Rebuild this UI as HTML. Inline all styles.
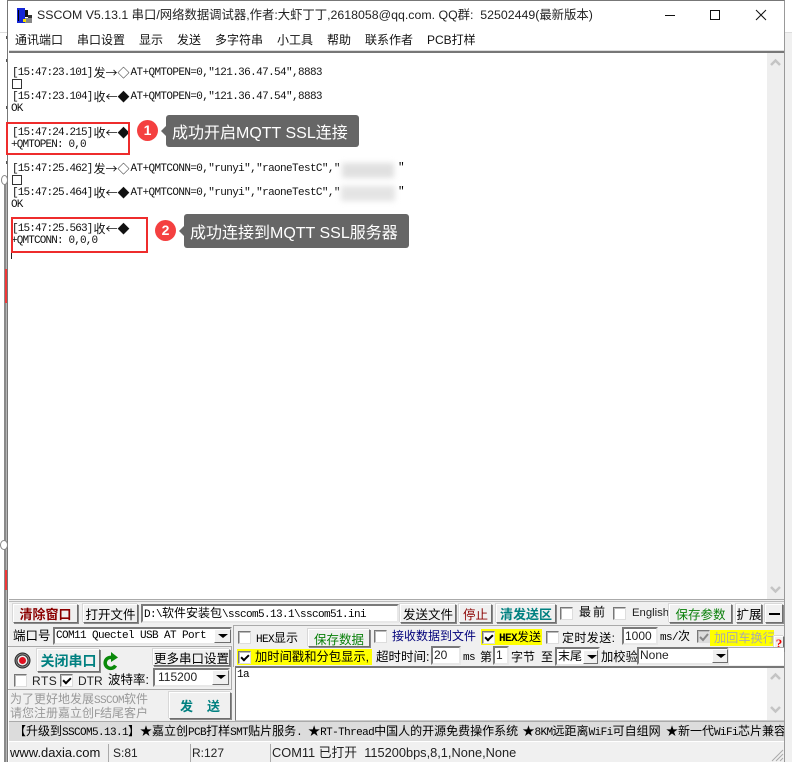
<!DOCTYPE html>
<html><head><meta charset="utf-8">
<style>
html,body{margin:0;padding:0;background:#fff;}
#r{position:relative;width:792px;height:762px;overflow:hidden;background:#fff;font-family:"Liberation Sans","Noto Sans CJK SC",sans-serif;font-size:12px;color:#000;}
#r div,#r span.t{position:absolute;box-sizing:border-box;white-space:nowrap;}
.t{line-height:14px;}
.b{background:#f0f0f0;border:1px solid;border-color:#fff #6e6e6e #6e6e6e #fff;box-shadow:1px 1px 0 #8a8a8a,-1px -1px 0 #d8d8d8;display:flex;align-items:center;justify-content:center;}
.i{background:#fff;border:2px solid;border-color:#7a7a7a #e8e8e8 #e8e8e8 #7a7a7a;line-height:15px;padding-left:1px;}
.c{width:13px;height:13px;background:#fff;border:1px solid;border-color:#777 #ddd #ddd #777;box-shadow:inset 1px 1px 0 #bbb;}
.ck::after{content:"";position:absolute;left:2px;top:1px;width:6px;height:3px;border-left:2px solid #000;border-bottom:2px solid #000;transform:rotate(-45deg) translate(-1px,1px);}
.d{width:17px;background:#f0f0f0;border:1px solid;border-color:#fff #6e6e6e #6e6e6e #fff;}
.d::after{content:"";position:absolute;left:3px;top:4px;border-left:5px solid transparent;border-right:5px solid transparent;border-top:4px solid #000;}
.m,.z{font-family:"Liberation Mono","Noto Sans CJK SC",monospace;font-size:11px;letter-spacing:-.6px;}
.l{left:12px;height:12px;line-height:12px;font-family:"Liberation Mono","Noto Sans CJK SC",monospace;font-size:11px;letter-spacing:-.85px;color:#111;}
.l i{font-style:normal;display:inline-block;width:12px;text-align:center;font-size:12px;letter-spacing:0;font-family:"Noto Sans CJK SC",sans-serif;line-height:12px;vertical-align:top;}
.l b{font-weight:normal;letter-spacing:-.62px;margin-left:1px;}
.tip{background:#666;color:#fff;font-size:16px;border-radius:3px;display:flex;align-items:center;padding-left:6px;}
.tip::before{content:"";position:absolute;left:-5px;top:50%;margin-top:-5px;border-top:5px solid transparent;border-bottom:5px solid transparent;border-right:5px solid #666;}
.o{background:#f44040;border-radius:50%;color:#fff;width:21px;height:21px;text-align:center;line-height:21px;font-size:14px;font-weight:bold;}
.y{background:#ff0;}
</style></head><body><div id="r">

<!-- outside -->
<div style="left:785px;top:32px;width:7px;height:730px;background:#f0f0f0;border-top:1px solid #ddd"></div>
<div style="left:0;top:32px;width:7px;height:1px;background:#ddd"></div>
<div style="left:4px;top:180px;width:2px;height:582px;background:#8a8a8a"></div>
<div style="left:6px;top:180px;width:1px;height:582px;background:#b5b5b5"></div>
<div style="left:5px;top:269px;width:2px;height:34px;background:#f03838"></div>
<div style="left:5px;top:570px;width:2px;height:20px;background:#f03838"></div>
<div style="left:6px;top:36px;width:1px;height:3px;background:#555"></div>
<div style="left:6px;top:59px;width:1px;height:3px;background:#555"></div>
<div style="left:6px;top:106px;width:1px;height:3px;background:#555"></div>
<div style="left:6px;top:161px;width:1px;height:3px;background:#555"></div>
<div style="left:7px;top:0;width:2px;height:762px;background:#777"></div>
<div style="left:0;top:540px;width:8px;height:10px;background:#fff;border:1px solid #888;border-radius:50%"></div>
<div style="left:1px;top:175px;width:7px;height:10px;background:#fff;border:1px solid #888;border-radius:50%"></div>

<!-- window frame -->
<div style="left:8px;top:0;width:777px;height:762px;background:#fff;border-top:1px solid #777;border-right:1px solid #999"></div>

<!-- title -->
<svg style="position:absolute;left:16px;top:7px" width="17" height="17" viewBox="0 0 17 17"><rect x="1" y="1" width="8" height="15" fill="#1426d6"/><rect x="2" y="3" width="1" height="11" fill="#000"/><rect x="9" y="3" width="3" height="7" fill="#111"/><rect x="12" y="8" width="4" height="3" fill="#333"/><rect x="9" y="11" width="7" height="5" fill="#888"/><rect x="7" y="12" width="3" height="3" fill="#f5e000"/></svg>
<span class="t" style="left:37px;top:8px;font-size:12.350px;color:#222">SSCOM V5.13.1 串口/网络数据调试器,作者:大虾丁丁,2618058@qq.com. QQ群:&nbsp; 52502449(最新版本)</span>
<div style="left:665px;top:15px;width:10px;height:1px;background:#111"></div>
<div style="left:710px;top:10px;width:10px;height:10px;border:1px solid #111"></div>
<svg style="position:absolute;left:755px;top:9px" width="12" height="12"><path d="M1 1L11 11M11 1L1 11" stroke="#111" stroke-width="1" fill="none"/></svg>

<!-- menu -->
<span class="t" style="left:15px;top:33px;color:#111">通讯端口</span>
<span class="t" style="left:77px;top:33px;color:#111">串口设置</span>
<span class="t" style="left:139px;top:33px;color:#111">显示</span>
<span class="t" style="left:177px;top:33px;color:#111">发送</span>
<span class="t" style="left:215px;top:33px;color:#111">多字符串</span>
<span class="t" style="left:277px;top:33px;color:#111">小工具</span>
<span class="t" style="left:327px;top:33px;color:#111">帮助</span>
<span class="t" style="left:365px;top:33px;color:#111">联系作者</span>
<span class="t" style="left:427px;top:33px;color:#111">PCB打样</span>

<div style="left:9px;top:50px;width:775px;height:1px;background:#ddd"></div>
<div style="left:9px;top:51px;width:775px;height:2px;background:#777"></div>

<!-- scrollbar -->
<div style="left:767px;top:53px;width:17px;height:546px;background:#eee"></div>
<svg style="position:absolute;left:769px;top:58px" width="13" height="9"><path d="M2 7L6.500 2.500L11 7" stroke="#c4c4c4" stroke-width="2.500" fill="none"/></svg>
<svg style="position:absolute;left:769px;top:585px" width="13" height="9"><path d="M2 2L6.500 6.500L11 2" stroke="#c4c4c4" stroke-width="2.500" fill="none"/></svg>

<!-- log -->
<div class="l" style="top:67px">[15:47:23.101]<i style="margin-left:1px">发</i><i>→</i><i>◇</i><b>AT+QMTOPEN=0,"121.36.47.54",8883</b></div>
<div style="left:12px;top:79px;width:10px;height:10px;border:1px solid #333"></div>
<div class="l" style="top:91px">[15:47:23.104]<i style="margin-left:1px">收</i><i>←</i><i>◆</i><b>AT+QMTOPEN=0,"121.36.47.54",8883</b></div>
<div class="l" style="top:103px;left:11px">OK</div>
<div class="l" style="top:127px">[15:47:24.215]<i style="margin-left:1px">收</i><i>←</i><i>◆</i></div>
<div class="l" style="top:139px;left:11px">+QMTOPEN: 0,0</div>
<div class="l" style="top:163px">[15:47:25.462]<i style="margin-left:1px">发</i><i>→</i><i>◇</i><b>AT+QMTCONN=0,"runyi","raoneTestC","</b></div>
<div style="left:12px;top:175px;width:10px;height:10px;border:1px solid #333"></div>
<div class="l" style="top:187px">[15:47:25.464]<i style="margin-left:1px">收</i><i>←</i><i>◆</i><b>AT+QMTCONN=0,"runyi","raoneTestC","</b></div>
<div class="l" style="top:199px;left:11px">OK</div>
<div class="l" style="top:223px">[15:47:25.563]<i style="margin-left:1px">收</i><i>←</i><i>◆</i></div>
<div class="l" style="top:235px;left:11px">+QMTCONN: 0,0,0</div>
<div style="left:11px;top:247px;width:1px;height:12px;background:#222"></div>

<!-- blur patches -->
<div style="left:340px;top:159px;width:58px;height:47px;background:#fff"></div>
<div style="left:342px;top:163px;width:52px;height:15px;background:#e0e0e0;filter:blur(3px)"></div>
<div style="left:341px;top:186px;width:54px;height:15px;background:#e4e4e4;filter:blur(3px)"></div>
<span class="t m" style="left:398px;top:162px;line-height:12px">"</span>
<span class="t m" style="left:398px;top:186px;line-height:12px">"</span>

<!-- annotations -->
<div style="left:6px;top:122px;width:124px;height:33px;border:2px solid #ee2c2c"></div>
<div style="left:11px;top:217px;width:137px;height:36px;border:2px solid #ee2c2c"></div>
<div class="o" style="left:137px;top:120px">1</div>
<div class="tip" style="left:166px;top:115px;width:193px;height:32px">成功开启MQTT SSL连接</div>
<div class="o" style="left:155px;top:220px">2</div>
<div class="tip" style="left:184px;top:214px;width:225px;height:34px">成功连接到MQTT SSL服务器</div>

<!-- bottom panel -->
<div style="left:9px;top:599px;width:775px;height:163px;background:#f0f0f0;border-top:1px solid #aaa"></div>
<div style="left:9px;top:601px;width:775px;height:1px;background:#bbb"></div>

<!-- row 1 -->
<div class="b" style="left:13px;top:604px;width:65px;height:19px;font-weight:bold;color:#8b0000;font-size:13px">清除窗口</div>
<div class="b" style="left:83px;top:604px;width:55px;height:19px;font-size:12.500px">打开文件</div>
<div class="i" style="left:141px;top:604px;width:258px;height:19px;line-height:14px"><span class="z">D:\</span>软件安装包<span class="z">\sscom5.13.1\sscom51.ini</span></div>
<div class="b" style="left:400px;top:604px;width:56px;height:19px;font-size:12.500px">发送文件</div>
<div class="b" style="left:459px;top:604px;width:33px;height:19px;font-size:12.500px;color:#8b0000">停止</div>
<div class="b" style="left:496px;top:604px;width:60px;height:19px;font-weight:bold;color:#008080;font-size:13px">清发送区</div>
<div class="c" style="left:560px;top:607px"></div>
<span class="t" style="left:579px;top:605px;letter-spacing:2px">最前</span>
<div class="c" style="left:613px;top:607px"></div>
<span class="t" style="left:632px;top:606px;color:#222;font-size:11.300px">English</span>
<div class="b" style="left:669px;top:604px;width:63px;height:19px;color:#0a800a;font-size:12.500px">保存参数</div>
<div class="b" style="left:736px;top:604px;width:26px;height:19px;font-size:12.500px">扩展</div>
<div class="b" style="left:765px;top:604px;width:18px;height:19px"><span style="display:block;width:11px;height:2px;background:#000"></span></div>

<!-- left group -->
<span class="t" style="left:13px;top:629px;font-size:12.500px">端口号</span>
<div class="i m" style="left:53px;top:627px;width:179px;height:18px;line-height:14px">COM11 Quectel USB AT Port</div>
<div class="d" style="left:214px;top:629px;height:14px"></div>
<div style="left:8px;top:646px;width:224px;height:1px;background:#aaa"></div>
<div style="left:8px;top:689px;width:224px;height:1px;background:#aaa"></div>
<div style="left:231px;top:646px;width:1px;height:44px;background:#aaa"></div>

<svg style="position:absolute;left:14px;top:652px" width="17" height="17"><circle cx="8.500" cy="8.500" r="7.500" fill="#888" stroke="#222" stroke-width="1"/><circle cx="8.500" cy="8.500" r="5.500" fill="#eee" stroke="#333" stroke-width="1"/><circle cx="8.500" cy="8.500" r="3.500" fill="#e01020"/></svg>
<div class="b" style="left:37px;top:649px;width:63px;height:23px;font-weight:bold;color:#008080;font-size:14px">关闭串口</div>
<svg style="position:absolute;left:103px;top:651px" width="17" height="20" viewBox="0 0 17 20"><path d="M12.500 14.500A5.500 5.500 0 1 1 9 6.500" stroke="#0a8a0a" stroke-width="3.500" fill="none"/><path d="M8 1L15 6.500L8 11Z" fill="#0a8a0a"/></svg>
<div class="b" style="left:153px;top:649px;width:77px;height:17px;font-size:12.500px">更多串口设置</div>
<div class="c" style="left:14px;top:674px"></div>
<span class="t" style="left:32px;top:674px;color:#222;letter-spacing:.5px">RTS</span>
<div class="c ck" style="left:60px;top:674px"></div>
<span class="t" style="left:78px;top:674px;color:#222">DTR</span>
<span class="t" style="left:108px;top:673px;font-size:12.500px">波特率:</span>
<div class="i" style="left:153px;top:668px;width:77px;height:19px;line-height:14px;padding-left:3px;color:#222">115200</div>
<div class="d" style="left:212px;top:670px;height:15px"></div>

<span class="t" style="left:10px;top:692px;color:#999">为了更好地发展<span class="z">SSCOM</span>软件</span>
<span class="t" style="left:10px;top:706px;color:#999">请您注册嘉立创<span class="z">F</span>结尾客户</span>
<div class="b" style="left:169px;top:692px;width:62px;height:27px;font-weight:bold;color:#008080;font-size:13px;letter-spacing:14px;padding-left:14px">发送</div>

<!-- right rows -->
<div style="left:233px;top:625px;width:551px;height:1px;background:#aaa"></div>
<div style="left:233px;top:625px;width:1px;height:42px;background:#aaa"></div>
<div class="c" style="left:238px;top:631px"></div>
<span class="t" style="left:256px;top:631px"><span class="z">HEX</span>显示</span>
<div class="b" style="left:308px;top:629px;width:62px;height:18px;color:#0a800a;font-size:12.500px">保存数据</div>
<div class="c" style="left:374px;top:630px"></div>
<span class="t" style="left:392px;top:629px;color:#00007a">接收数据到文件</span>

<div class="y" style="left:481px;top:629px;width:61px;height:16px"></div>
<div class="c ck" style="left:482px;top:631px"></div>
<span class="t" style="left:499px;top:630px"><span class="z" style="font-weight:bold">HEX</span>发送</span>
<div class="c" style="left:546px;top:631px"></div>
<span class="t" style="left:562px;top:631px;letter-spacing:.4px">定时发送:</span>
<div class="i" style="left:622px;top:627px;width:36px;height:18px;line-height:14px;padding-left:1px;color:#222">1000</div>
<span class="t" style="left:660px;top:629px"><span class="z">ms/</span>次</span>
<div class="c" style="left:697px;top:630px;background:#ddd"></div>
<svg style="position:absolute;left:698px;top:631px" width="12" height="12"><path d="M2 6L5 9L10 3" stroke="#888" stroke-width="2" fill="none"/></svg>
<div class="y" style="left:710px;top:630px;width:64px;height:16px"></div>
<span class="t" style="left:714px;top:631px;color:#aaa;font-size:12.200px">加回车换行</span>
<div class="b" style="left:774px;top:636px;width:10px;height:15px;color:#e00;font-weight:bold;font-size:13px;font-family:'Liberation Serif',serif">?</div>

<div class="y" style="left:237px;top:649px;width:135px;height:16px"></div>
<div class="c ck" style="left:238px;top:651px"></div>
<span class="t" style="left:255px;top:650px;font-size:12.300px">加时间戳和分包显示,</span>
<span class="t" style="left:376px;top:650px;font-size:12.500px">超时时间:</span>
<div class="i" style="left:431px;top:646px;width:30px;height:19px;line-height:14px;padding-left:1px;color:#222">20</div>
<span class="t m" style="left:463px;top:651px">ms</span>
<span class="t" style="left:480px;top:650px">第</span>
<div class="i" style="left:493px;top:646px;width:16px;height:19px;line-height:14px;color:#222">1</div>
<span class="t" style="left:511px;top:650px">字节</span>
<span class="t" style="left:541px;top:650px">至</span>
<div class="i" style="left:555px;top:647px;width:45px;height:19px;line-height:14px;padding-left:1px">末尾</div>
<div class="d" style="left:583px;top:650px;height:14px;width:15px"></div>
<span class="t" style="left:601px;top:650px;font-size:12.300px">加校验</span>
<div class="i" style="left:637px;top:647px;width:92px;height:18px;line-height:13px;padding-left:1px;color:#222">None</div>
<div class="d" style="left:712px;top:649px;height:14px;width:16px"></div>
<div style="left:729px;top:647px;width:55px;height:18px;background:#fff;border-top:1px solid #aaa"></div>

<!-- send area -->
<div style="left:235px;top:666px;width:549px;height:55px;background:#fff;border-top:2px solid #777;border-left:1px solid #777;border-bottom:1px solid #ccc"></div>
<span class="t m" style="left:237px;top:668px">1a</span>
<div style="left:767px;top:668px;width:17px;height:52px;background:#eee"></div>
<svg style="position:absolute;left:769px;top:672px" width="13" height="9"><path d="M2 7L6.500 2.500L11 7" stroke="#c4c4c4" stroke-width="2.500" fill="none"/></svg>
<svg style="position:absolute;left:769px;top:705px" width="13" height="9"><path d="M2 2L6.500 6.500L11 2" stroke="#c4c4c4" stroke-width="2.500" fill="none"/></svg>

<!-- ticker -->
<div style="left:9px;top:721px;width:775px;height:20px;background:#dcdcdc;border-top:1px solid #aaa;overflow:hidden">
<span class="t" style="position:absolute;left:5px;top:2px">【升级到<span class="z">SSCOM5.13.1</span>】★嘉立创<span class="z">PCB</span>打样<span class="z">SMT</span>贴片服务<span class="z">. </span>★<span class="z">RT-Thread</span>中国人的开源免费操作系统<span style="margin-left:1px"> </span>★<span class="z">8KM</span>远距离<span class="z">WiFi</span>可自组网<span style="margin-left:2px"> </span>★新一代<span class="z">WiFi</span>芯片兼容</span>
</div>

<!-- status -->
<div style="left:9px;top:741px;width:775px;height:21px;background:#f0f0f0;border-top:1px solid #fff"></div>
<div style="left:108px;top:744px;width:1px;height:18px;background:#aaa"></div>
<div style="left:190px;top:744px;width:1px;height:18px;background:#aaa"></div>
<div style="left:270px;top:744px;width:1px;height:18px;background:#aaa"></div>
<span class="t" style="left:10px;top:746px;color:#111;font-size:13px">www.daxia.com</span>
<span class="t" style="left:113px;top:746px;color:#222">S:81</span>
<span class="t" style="left:192px;top:746px;color:#222">R:127</span>
<span class="t" style="left:272px;top:746px;color:#222;font-size:12.800px">COM11 已打开&nbsp; 115200bps,8,1,None,None</span>
<svg style="position:absolute;left:771px;top:749px" width="13" height="13"><path d="M12 1L1 12M12 5L5 12M12 9L9 12" stroke="#aaa" stroke-width="1" fill="none"/></svg>

</div></body></html>
